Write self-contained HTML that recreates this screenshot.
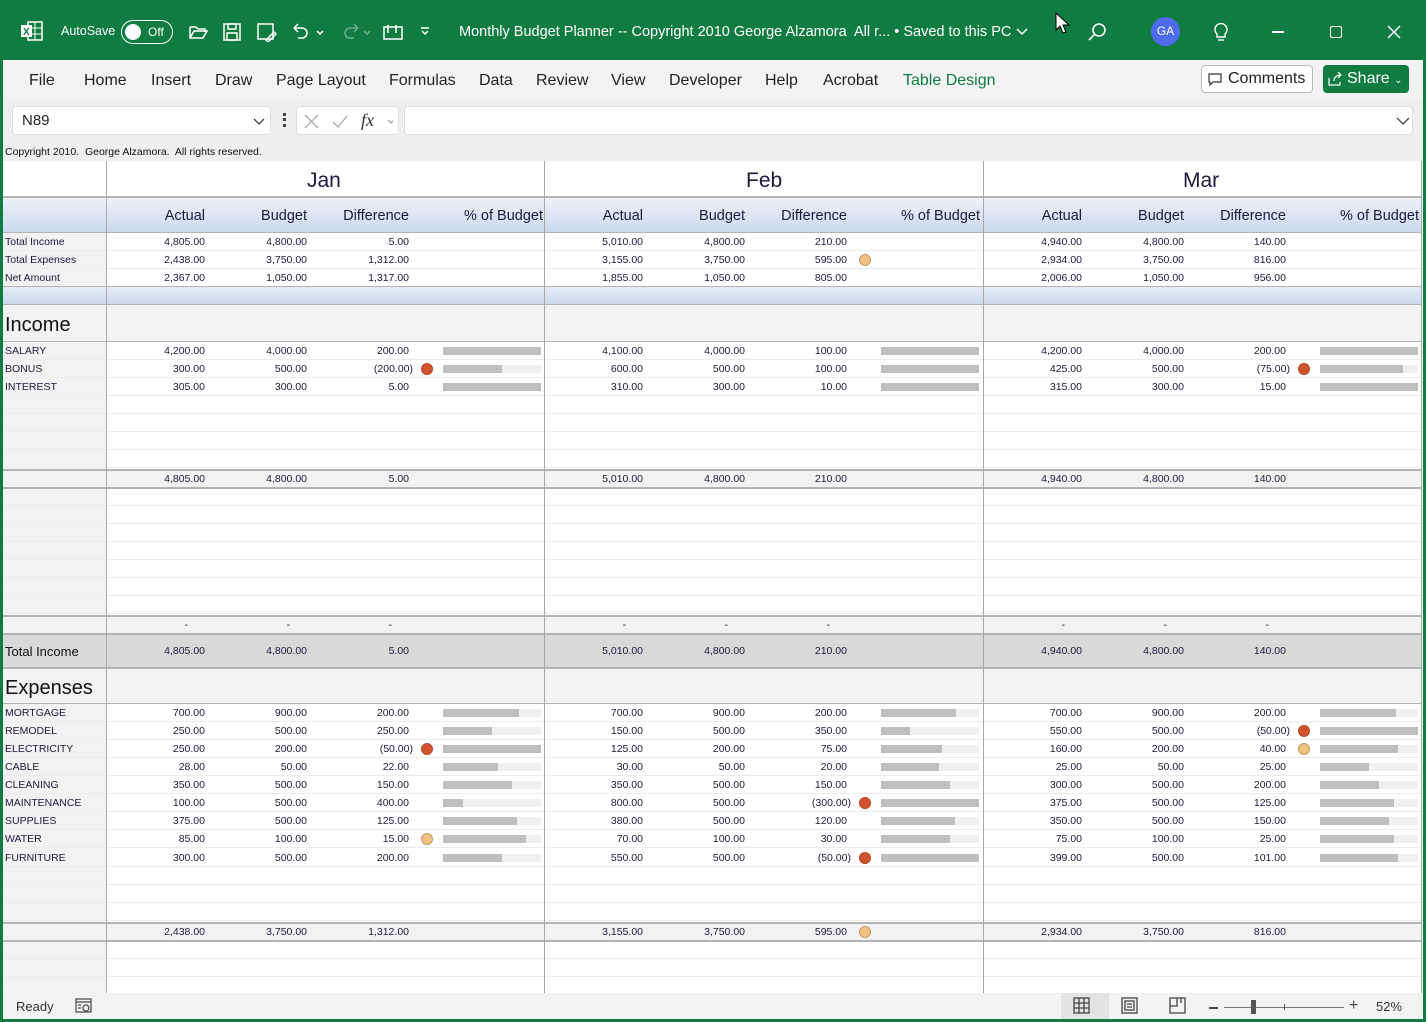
<!DOCTYPE html>
<html><head><meta charset="utf-8"><style>
*{box-sizing:border-box;margin:0;padding:0}
body{width:1426px;height:1022px;overflow:hidden;background:#107c41;font-family:"Liberation Sans",sans-serif;position:relative}
.abs{position:absolute}
#title{left:0;top:0;width:1426px;height:60px;color:#fff;font-size:14px}
#win{left:3px;top:60px;width:1420px;height:959px;background:#f3f3f3}
.tab{position:absolute;top:12px;font-size:16px;color:#222}
#sheet{left:3px;top:161px;width:1419px;height:832px;background:#fff;overflow:hidden}
.row{position:absolute;left:0;width:1419px;height:18px;border-bottom:1px solid #ececec;font-size:10.5px;line-height:18px;color:#1a1a40}
.lbl{position:absolute;left:0;top:0;width:103px;height:100%;background:#f2f2f2;padding-left:2px;font-size:10.5px}
.m{position:absolute;top:0;width:438px;height:100%}
.a,.b,.d{position:absolute;width:100px;text-align:right;top:0}
.a{left:-5px}.b{left:97px}.d{left:199px}.d.n{left:203px}
.bar{position:absolute;left:333px;top:5px;width:98px;height:8px;background:#f0f0f0}
.bar i{display:block;height:8px;background:#bfbfbf}
.dot{position:absolute;left:311px;top:3px;width:12px;height:12px;border-radius:50%;background:#d0532e;border:1px solid #b8462a}
.dot.o{background:#f0c286;border-color:#c79a5e}
.vl{position:absolute;top:0;width:1px;height:832px;background:#a8a8a8}
.hl{position:absolute;left:0;width:1419px;height:2px;background:#b4b4b4}
.hdr{font-size:14.5px;color:#1a1a40}
</style></head><body>
<div id="title" class="abs">
  <svg class="abs" style="left:21px;top:21px" width="22" height="20" viewBox="0 0 22 20"><rect x="7" y="1" width="14" height="18" fill="none" stroke="#fff" stroke-width="1.5"/><line x1="14" y1="1" x2="14" y2="19" stroke="#fff"/><line x1="7" y1="7" x2="21" y2="7" stroke="#fff"/><line x1="7" y1="13" x2="21" y2="13" stroke="#fff"/><rect x="0" y="4" width="11" height="12" fill="#fff"/><text x="2" y="14" font-size="10" font-weight="bold" fill="#107c41" font-family="Liberation Sans">X</text></svg>
  <span class="abs" style="left:61px;top:24px;font-size:12.5px">AutoSave</span>
  <div class="abs" style="left:121px;top:20px;width:52px;height:24px;border:1.5px solid #fff;border-radius:12px"><div class="abs" style="left:3px;top:3px;width:16px;height:16px;border-radius:50%;background:#fff"></div><span class="abs" style="left:26px;top:4px;font-size:12px">Off</span></div>
  <svg class="abs" style="left:188px;top:22px" width="250" height="20" fill="none" stroke="#fff" stroke-width="1.5"><path d="M2 5h6l2 2h7v3M2 5v11h13l4-7H6l-4 7"/><rect x="36" y="2" width="16" height="16"/><rect x="40" y="2" width="8" height="5"/><rect x="39" y="11" width="10" height="7"/><rect x="70" y="2" width="15" height="15"/><path d="M78 18l8-8 2 2-8 8z"/><path d="M106 6h8a5 5 0 0 1 0 10h-4M106 6l4-4M106 6l4 4"/><path d="M129 9l3 3 3-3"/><path d="M170 6h-8a5 5 0 0 0 0 10h4M170 6l-4-4M170 6l-4 4" stroke="#6fb08c"/><path d="M176 9l3 3 3-3" stroke="#6fb08c"/><rect x="196" y="5" width="18" height="12"/><path d="M200 3v8M208 3v8"/><path d="M234 9l3 3 3-3M233 6h8"/></svg>
  <span class="abs" style="left:459px;top:24px;font-size:14.5px">Monthly Budget Planner -- Copyright 2010 George Alzamora&nbsp; All r... • Saved to this PC</span>
  <svg class="abs" style="left:1016px;top:28px" width="12" height="8" fill="none" stroke="#fff" stroke-width="1.5"><path d="M1 1l5 5 5-5"/></svg>
  <svg class="abs" style="left:1055px;top:12px" width="16" height="24"><path d="M1 1v17l4-4 3 7 3-1-3-7h6z" fill="#fff" stroke="#000"/></svg>
  <svg class="abs" style="left:1087px;top:22px" width="20" height="20" fill="none" stroke="#fff" stroke-width="1.6"><circle cx="12" cy="8" r="6"/><path d="M8 12l-6 6"/></svg>
  <div class="abs" style="left:1151px;top:17px;width:29px;height:29px;border-radius:50%;background:#4f6bed;font-size:12px;text-align:center;line-height:29px">GA</div>
  <svg class="abs" style="left:1213px;top:22px" width="16" height="20" fill="none" stroke="#fff" stroke-width="1.4"><path d="M4 12a6 6 0 1 1 8 0v3H4z"/><path d="M5 18h6"/></svg>
  <div class="abs" style="left:1272px;top:31px;width:12px;height:1.5px;background:#fff"></div>
  <div class="abs" style="left:1330px;top:26px;width:12px;height:12px;border:1.5px solid #fff;border-radius:2px"></div>
  <svg class="abs" style="left:1387px;top:25px" width="14" height="14" stroke="#fff" stroke-width="1.5"><path d="M1 1l12 12M13 1L1 13"/></svg>
</div>
<div id="win" class="abs">
  <span class="tab" style="left:26px">File</span><span class="tab" style="left:81px">Home</span><span class="tab" style="left:148px">Insert</span><span class="tab" style="left:212px">Draw</span><span class="tab" style="left:273px">Page Layout</span><span class="tab" style="left:386px">Formulas</span><span class="tab" style="left:476px">Data</span><span class="tab" style="left:533px">Review</span><span class="tab" style="left:608px">View</span><span class="tab" style="left:666px">Developer</span><span class="tab" style="left:762px">Help</span><span class="tab" style="left:820px">Acrobat</span><span class="tab" style="left:900px;color:#107c41">Table Design</span>
  <div class="abs" style="left:1198px;top:5px;width:112px;height:28px;background:#fff;border:1px solid #bbb;border-radius:4px;font-size:16px;line-height:26px;padding-left:26px;color:#222">Comments<svg class="abs" style="left:6px;top:7px" width="14" height="13" fill="none" stroke="#333" stroke-width="1.2"><path d="M1 1h12v8H5l-3 3V9H1z"/></svg></div>
  <div class="abs" style="left:1320px;top:5px;width:86px;height:28px;background:#107c41;border-radius:4px;font-size:16px;line-height:28px;padding-left:24px;color:#fff">Share&nbsp;<span style="font-size:10px">⌄</span><svg class="abs" style="left:5px;top:7px" width="16" height="14" fill="none" stroke="#fff" stroke-width="1.2"><path d="M1 6v7h11v-3M6 9c0-4 3-6 7-6M10 0l3 3-3 3"/></svg></div>
  <div class="abs" style="left:0;top:38px;width:1420px;height:63px;background:#efefef"></div>
  <div class="abs" style="left:9px;top:46px;width:259px;height:29px;background:#fff;border:1px solid #ddd;border-radius:4px;font-size:15px;line-height:27px;padding-left:9px;color:#222">N89<svg class="abs" style="left:240px;top:11px" width="12" height="8" fill="none" stroke="#444" stroke-width="1.3"><path d="M1 1l5 5 5-5"/></svg></div>
  <div class="abs" style="left:280px;top:53px;width:3px;height:14px;border-left:3px dotted #444"></div>
  <div class="abs" style="left:293px;top:46px;width:103px;height:29px;background:#fff;border:1px solid #ddd;border-radius:4px"><svg class="abs" style="left:6px;top:7px" width="90" height="16" fill="none" stroke="#aaa" stroke-width="1.3"><path d="M2 1l13 13M15 1L2 14M30 8l5 5 9-11M85 6l3 3 3-3"/></svg><i class="abs" style="left:64px;top:3px;font-family:'Liberation Serif',serif;font-size:18px;color:#333">fx</i></div>
  <div class="abs" style="left:401px;top:46px;width:1009px;height:29px;background:#fff;border:1px solid #ddd;border-radius:4px"><svg class="abs" style="left:991px;top:10px" width="14" height="8" fill="none" stroke="#444" stroke-width="1.3"><path d="M1 1l6 6 6-6"/></svg></div>
  <span class="abs" style="left:2px;top:86px;font-size:10.5px;color:#111">Copyright 2010.&nbsp; George Alzamora.&nbsp; All rights reserved.</span>
  <span class="abs" style="left:13px;top:939px;font-size:13px;color:#333">Ready</span>
  <svg class="abs" style="left:72px;top:938px" width="18" height="16" fill="none" stroke="#444" stroke-width="1.2"><rect x="1" y="1" width="15" height="13"/><path d="M1 4h15M3 7h3M3 10h3"/><circle cx="11" cy="10" r="3"/></svg>
  <div class="abs" style="left:1058px;top:933px;width:48px;height:26px;background:#e3e3e3"></div>
  <svg class="abs" style="left:1070px;top:937px" width="17" height="17" fill="none" stroke="#444" stroke-width="1.3"><rect x="1" y="1" width="15" height="15"/><path d="M6 1v15M11 1v15M1 6h15M1 11h15"/></svg>
  <svg class="abs" style="left:1118px;top:937px" width="17" height="17" fill="none" stroke="#444" stroke-width="1.3"><rect x="1" y="1" width="15" height="15"/><rect x="4" y="4" width="9" height="9"/><path d="M6 7h5M6 10h5"/></svg>
  <svg class="abs" style="left:1166px;top:937px" width="17" height="17" fill="none" stroke="#444" stroke-width="1.3"><path d="M1 1h15v15H1zM8 1v8H1M12 1v5"/></svg>
  <div class="abs" style="left:1206px;top:947px;width:9px;height:1.5px;background:#444"></div>
  <div class="abs" style="left:1221px;top:947px;width:120px;height:1px;background:#777"></div>
  <div class="abs" style="left:1248px;top:940px;width:5px;height:14px;background:#555"></div>
  <div class="abs" style="left:1281px;top:944px;width:1px;height:6px;background:#555"></div>
  <span class="abs" style="left:1346px;top:937px;font-size:16px;color:#444">+</span>
  <span class="abs" style="left:1373px;top:939px;font-size:13px;color:#333">52%</span>
</div>

<div id="sheet" class="abs">
  <div class="abs" style="left:0;top:0;width:103px;height:832px;background:#f2f2f2"></div>
  <div class="abs" style="left:0;top:0;width:103px;height:36px;background:#fff"></div>
  <div class="abs" style="left:0;top:36px;width:1419px;height:36px;background:linear-gradient(#eef3f9,#c9d9ec)"></div>
  <div class="abs" style="left:0;top:126px;width:1419px;height:18px;background:linear-gradient(#e4ecf6,#c9d9ec)"></div>
  <div class="abs" style="left:0;top:144px;width:1419px;height:37px;background:#f2f2f2"></div>
  <div class="abs" style="left:0;top:455px;width:1419px;height:18px;background:#f2f2f2"></div>
  <div class="abs" style="left:0;top:473px;width:1419px;height:34px;background:#d9d9d9"></div>
  <div class="abs" style="left:0;top:507px;width:1419px;height:36px;background:#f2f2f2"></div>
  <div class="abs" style="left:0;top:309px;width:1419px;height:18px;background:#f2f2f2"></div>
  <div class="abs" style="left:0;top:762px;width:1419px;height:18px;background:#f2f2f2"></div>
  <div class="hdr abs" style="left:304px;top:8px;font-size:21px">Jan</div>
  <div class="hdr abs" style="left:743px;top:8px;font-size:21px">Feb</div>
  <div class="hdr abs" style="left:1180px;top:8px;font-size:21px">Mar</div>
  <div class="abs hdr" style="left:107px;top:47px;width:438px;height:20px"><span class="a">Actual</span><span class="b">Budget</span><span class="d">Difference</span><span class="abs" style="left:333px;width:100px;text-align:right">% of Budget</span></div>
  <div class="abs hdr" style="left:545px;top:47px;width:438px;height:20px"><span class="a">Actual</span><span class="b">Budget</span><span class="d">Difference</span><span class="abs" style="left:332px;width:100px;text-align:right">% of Budget</span></div>
  <div class="abs hdr" style="left:984px;top:47px;width:438px;height:20px"><span class="a">Actual</span><span class="b">Budget</span><span class="d">Difference</span><span class="abs" style="left:332px;width:100px;text-align:right">% of Budget</span></div>
  <div class="abs" style="left:2px;top:153px;font-size:20px;color:#111">Income</div>
  <div class="abs" style="left:2px;top:516px;font-size:20px;color:#111">Expenses</div>
  <div class="abs" style="left:2px;top:483px;font-size:13px;color:#111">Total Income</div>

  <div class="row" style="top:72px;background:transparent"><div class="lbl">Total Income</div><div class="m" style="left:107px"><span class="a">4,805.00</span><span class="b">4,800.00</span><span class="d">5.00</span></div><div class="m" style="left:545px"><span class="a">5,010.00</span><span class="b">4,800.00</span><span class="d">210.00</span></div><div class="m" style="left:984px"><span class="a">4,940.00</span><span class="b">4,800.00</span><span class="d">140.00</span></div></div>
  <div class="row" style="top:90px"><div class="lbl">Total Expenses</div><div class="m" style="left:107px"><span class="a">2,438.00</span><span class="b">3,750.00</span><span class="d">1,312.00</span></div><div class="m" style="left:545px"><span class="a">3,155.00</span><span class="b">3,750.00</span><span class="d">595.00</span><span class="dot o"></span></div><div class="m" style="left:984px"><span class="a">2,934.00</span><span class="b">3,750.00</span><span class="d">816.00</span></div></div>
  <div class="row" style="top:108px"><div class="lbl">Net Amount</div><div class="m" style="left:107px"><span class="a">2,367.00</span><span class="b">1,050.00</span><span class="d">1,317.00</span></div><div class="m" style="left:545px"><span class="a">1,855.00</span><span class="b">1,050.00</span><span class="d">805.00</span></div><div class="m" style="left:984px"><span class="a">2,006.00</span><span class="b">1,050.00</span><span class="d">956.00</span></div></div>

  <div class="row" style="top:181px"><div class="lbl">SALARY</div><div class="m" style="left:107px"><span class="a">4,200.00</span><span class="b">4,000.00</span><span class="d">200.00</span><div class="bar"><i style="width:100%"></i></div></div><div class="m" style="left:545px"><span class="a">4,100.00</span><span class="b">4,000.00</span><span class="d">100.00</span><div class="bar"><i style="width:100%"></i></div></div><div class="m" style="left:984px"><span class="a">4,200.00</span><span class="b">4,000.00</span><span class="d">200.00</span><div class="bar"><i style="width:100%"></i></div></div></div>
  <div class="row" style="top:199px"><div class="lbl">BONUS</div><div class="m" style="left:107px"><span class="a">300.00</span><span class="b">500.00</span><span class="d n">(200.00)</span><span class="dot"></span><div class="bar"><i style="width:60%"></i></div></div><div class="m" style="left:545px"><span class="a">600.00</span><span class="b">500.00</span><span class="d">100.00</span><div class="bar"><i style="width:100%"></i></div></div><div class="m" style="left:984px"><span class="a">425.00</span><span class="b">500.00</span><span class="d n">(75.00)</span><span class="dot"></span><div class="bar"><i style="width:85%"></i></div></div></div>
  <div class="row" style="top:217px"><div class="lbl">INTEREST</div><div class="m" style="left:107px"><span class="a">305.00</span><span class="b">300.00</span><span class="d">5.00</span><div class="bar"><i style="width:100%"></i></div></div><div class="m" style="left:545px"><span class="a">310.00</span><span class="b">300.00</span><span class="d">10.00</span><div class="bar"><i style="width:100%"></i></div></div><div class="m" style="left:984px"><span class="a">315.00</span><span class="b">300.00</span><span class="d">15.00</span><div class="bar"><i style="width:100%"></i></div></div></div>
  <div class="row" style="top:235px"></div><div class="row" style="top:253px"></div><div class="row" style="top:271px"></div><div class="row" style="top:289px"></div>
  <div class="row" style="top:309px"><div class="m" style="left:107px"><span class="a">4,805.00</span><span class="b">4,800.00</span><span class="d">5.00</span></div><div class="m" style="left:545px"><span class="a">5,010.00</span><span class="b">4,800.00</span><span class="d">210.00</span></div><div class="m" style="left:984px"><span class="a">4,940.00</span><span class="b">4,800.00</span><span class="d">140.00</span></div></div>
  <div class="row" style="top:327px"></div><div class="row" style="top:345px"></div><div class="row" style="top:363px"></div><div class="row" style="top:381px"></div><div class="row" style="top:399px"></div><div class="row" style="top:417px"></div><div class="row" style="top:435px"></div>
  <div class="row" style="top:455px"><div class="m" style="left:107px"><span class="a" style="left:-22px">-</span><span class="b" style="left:80px">-</span><span class="d" style="left:182px">-</span></div><div class="m" style="left:545px"><span class="a" style="left:-22px">-</span><span class="b" style="left:80px">-</span><span class="d" style="left:182px">-</span></div><div class="m" style="left:984px"><span class="a" style="left:-22px">-</span><span class="b" style="left:80px">-</span><span class="d" style="left:182px">-</span></div></div>
  <div class="row" style="top:481px;border:none"><div class="m" style="left:107px"><span class="a">4,805.00</span><span class="b">4,800.00</span><span class="d">5.00</span></div><div class="m" style="left:545px"><span class="a">5,010.00</span><span class="b">4,800.00</span><span class="d">210.00</span></div><div class="m" style="left:984px"><span class="a">4,940.00</span><span class="b">4,800.00</span><span class="d">140.00</span></div></div>

  <div class="row" style="top:543px"><div class="lbl">MORTGAGE</div><div class="m" style="left:107px"><span class="a">700.00</span><span class="b">900.00</span><span class="d">200.00</span><div class="bar"><i style="width:78%"></i></div></div><div class="m" style="left:545px"><span class="a">700.00</span><span class="b">900.00</span><span class="d">200.00</span><div class="bar"><i style="width:77%"></i></div></div><div class="m" style="left:984px"><span class="a">700.00</span><span class="b">900.00</span><span class="d">200.00</span><div class="bar"><i style="width:78%"></i></div></div></div>
  <div class="row" style="top:561px"><div class="lbl">REMODEL</div><div class="m" style="left:107px"><span class="a">250.00</span><span class="b">500.00</span><span class="d">250.00</span><div class="bar"><i style="width:50%"></i></div></div><div class="m" style="left:545px"><span class="a">150.00</span><span class="b">500.00</span><span class="d">350.00</span><div class="bar"><i style="width:30%"></i></div></div><div class="m" style="left:984px"><span class="a">550.00</span><span class="b">500.00</span><span class="d n">(50.00)</span><span class="dot"></span><div class="bar"><i style="width:100%"></i></div></div></div>
  <div class="row" style="top:579px"><div class="lbl">ELECTRICITY</div><div class="m" style="left:107px"><span class="a">250.00</span><span class="b">200.00</span><span class="d n">(50.00)</span><span class="dot"></span><div class="bar"><i style="width:100%"></i></div></div><div class="m" style="left:545px"><span class="a">125.00</span><span class="b">200.00</span><span class="d">75.00</span><div class="bar"><i style="width:62%"></i></div></div><div class="m" style="left:984px"><span class="a">160.00</span><span class="b">200.00</span><span class="d">40.00</span><span class="dot o"></span><div class="bar"><i style="width:80%"></i></div></div></div>
  <div class="row" style="top:597px"><div class="lbl">CABLE</div><div class="m" style="left:107px"><span class="a">28.00</span><span class="b">50.00</span><span class="d">22.00</span><div class="bar"><i style="width:56%"></i></div></div><div class="m" style="left:545px"><span class="a">30.00</span><span class="b">50.00</span><span class="d">20.00</span><div class="bar"><i style="width:59%"></i></div></div><div class="m" style="left:984px"><span class="a">25.00</span><span class="b">50.00</span><span class="d">25.00</span><div class="bar"><i style="width:50%"></i></div></div></div>
  <div class="row" style="top:615px"><div class="lbl">CLEANING</div><div class="m" style="left:107px"><span class="a">350.00</span><span class="b">500.00</span><span class="d">150.00</span><div class="bar"><i style="width:70%"></i></div></div><div class="m" style="left:545px"><span class="a">350.00</span><span class="b">500.00</span><span class="d">150.00</span><div class="bar"><i style="width:70%"></i></div></div><div class="m" style="left:984px"><span class="a">300.00</span><span class="b">500.00</span><span class="d">200.00</span><div class="bar"><i style="width:60%"></i></div></div></div>
  <div class="row" style="top:633px"><div class="lbl">MAINTENANCE</div><div class="m" style="left:107px"><span class="a">100.00</span><span class="b">500.00</span><span class="d">400.00</span><div class="bar"><i style="width:20%"></i></div></div><div class="m" style="left:545px"><span class="a">800.00</span><span class="b">500.00</span><span class="d n">(300.00)</span><span class="dot"></span><div class="bar"><i style="width:100%"></i></div></div><div class="m" style="left:984px"><span class="a">375.00</span><span class="b">500.00</span><span class="d">125.00</span><div class="bar"><i style="width:75%"></i></div></div></div>
  <div class="row" style="top:651px"><div class="lbl">SUPPLIES</div><div class="m" style="left:107px"><span class="a">375.00</span><span class="b">500.00</span><span class="d">125.00</span><div class="bar"><i style="width:75%"></i></div></div><div class="m" style="left:545px"><span class="a">380.00</span><span class="b">500.00</span><span class="d">120.00</span><div class="bar"><i style="width:76%"></i></div></div><div class="m" style="left:984px"><span class="a">350.00</span><span class="b">500.00</span><span class="d">150.00</span><div class="bar"><i style="width:70%"></i></div></div></div>
  <div class="row" style="top:669px"><div class="lbl">WATER</div><div class="m" style="left:107px"><span class="a">85.00</span><span class="b">100.00</span><span class="d">15.00</span><span class="dot o"></span><div class="bar"><i style="width:85%"></i></div></div><div class="m" style="left:545px"><span class="a">70.00</span><span class="b">100.00</span><span class="d">30.00</span><div class="bar"><i style="width:70%"></i></div></div><div class="m" style="left:984px"><span class="a">75.00</span><span class="b">100.00</span><span class="d">25.00</span><div class="bar"><i style="width:75%"></i></div></div></div>
  <div class="row" style="top:688px"><div class="lbl">FURNITURE</div><div class="m" style="left:107px"><span class="a">300.00</span><span class="b">500.00</span><span class="d">200.00</span><div class="bar"><i style="width:60%"></i></div></div><div class="m" style="left:545px"><span class="a">550.00</span><span class="b">500.00</span><span class="d n">(50.00)</span><span class="dot"></span><div class="bar"><i style="width:100%"></i></div></div><div class="m" style="left:984px"><span class="a">399.00</span><span class="b">500.00</span><span class="d">101.00</span><div class="bar"><i style="width:80%"></i></div></div></div>
  <div class="row" style="top:706px"></div><div class="row" style="top:724px"></div><div class="row" style="top:742px"></div>
  <div class="row" style="top:762px"><div class="m" style="left:107px"><span class="a">2,438.00</span><span class="b">3,750.00</span><span class="d">1,312.00</span></div><div class="m" style="left:545px"><span class="a">3,155.00</span><span class="b">3,750.00</span><span class="d">595.00</span><span class="dot o"></span></div><div class="m" style="left:984px"><span class="a">2,934.00</span><span class="b">3,750.00</span><span class="d">816.00</span></div></div>
  <div class="row" style="top:780px"></div><div class="row" style="top:798px"></div><div class="row" style="top:816px"></div>

  <div class="hl" style="top:35px"></div>
  <div class="hl" style="top:71px;height:1px"></div>
  <div class="hl" style="top:125px;height:1px"></div>
  <div class="hl" style="top:143px;height:1px"></div>
  <div class="hl" style="top:180px;height:1px"></div>
  <div class="hl" style="top:308px"></div>
  <div class="hl" style="top:326px"></div>
  <div class="hl" style="top:454px"></div>
  <div class="hl" style="top:472px"></div>
  <div class="hl" style="top:506px"></div>
  <div class="hl" style="top:542px;height:1px"></div>
  <div class="hl" style="top:761px"></div>
  <div class="hl" style="top:779px"></div>
  <div class="vl" style="left:103px"></div>
  <div class="vl" style="left:541px"></div>
  <div class="vl" style="left:980px"></div>
  <div class="vl" style="left:1418px"></div>
</div>
</body></html>
